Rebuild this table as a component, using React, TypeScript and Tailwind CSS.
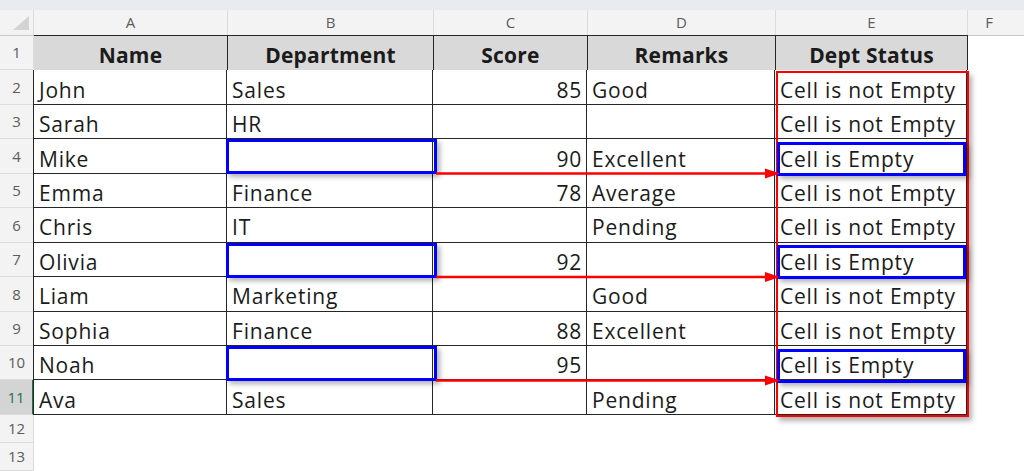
import React from "react";

const cols = [
  { letter: "A", w: "w-[194px]" },
  { letter: "B", w: "w-[206px]" },
  { letter: "C", w: "w-[154px]" },
  { letter: "D", w: "w-[188px]" },
  { letter: "E", w: "w-[192px]" },
];

const header = ["Name", "Department", "Score", "Remarks", "Dept Status"];

const data: [string, string, string, string, string][] = [
  ["John", "Sales", "85", "Good", "Cell is not Empty"],
  ["Sarah", "HR", "", "", "Cell is not Empty"],
  ["Mike", "", "90", "Excellent", "Cell is Empty"],
  ["Emma", "Finance", "78", "Average", "Cell is not Empty"],
  ["Chris", "IT", "", "Pending", "Cell is not Empty"],
  ["Olivia", "", "92", "", "Cell is Empty"],
  ["Liam", "Marketing", "", "Good", "Cell is not Empty"],
  ["Sophia", "Finance", "88", "Excellent", "Cell is not Empty"],
  ["Noah", "", "95", "", "Cell is Empty"],
  ["Ava", "Sales", "", "Pending", "Cell is not Empty"],
];

function RowHead({ n, active }: { n: number; active?: boolean }) {
  return (
    <div
      className={
        "w-[34px] shrink-0 flex items-center justify-center text-[15px] border-b border-r border-[#dcdcdc] " +
        (active ? "bg-[#d4d4d4] text-[#217346] border-r-2 border-r-[#217346]" : "bg-[#f3f3f3] text-[#5c5c5c]")
      }
    >
      {n}
    </div>
  );
}

export default function App() {
  const arrowRows = [173.5, 277, 380.5];
  return (
    <div
      className="relative w-[1024px] h-[471px] overflow-hidden bg-white text-[#1b1b1b]"
      style={{ fontFamily: '"Open Sans", "Noto Sans", sans-serif' }}
    >
      {/* top strip */}
      <div className="h-[10px] bg-[#e8ebef]" />
      {/* column headers */}
      <div className="flex h-[26px] bg-[#f3f3f3] border-b border-[#c9c9c9] text-[15px] text-[#5c5c5c]">
        <div className="w-[34px] shrink-0 relative border-r border-[#dcdcdc]">
          <svg className="absolute right-[4px] bottom-[5px]" width="16" height="14" viewBox="0 0 16 14">
            <polygon points="16,0 16,14 0,14" fill="#d3d3d3" />
          </svg>
        </div>
        {cols.map((c) => (
          <div key={c.letter} className={c.w + " shrink-0 flex items-center justify-center border-r border-[#dcdcdc]"}>
            {c.letter}
          </div>
        ))}
        <div className="flex-1 flex items-center justify-center pr-[14px]">F</div>
      </div>

      {/* header row 1 */}
      <div className="flex h-[34.45px]">
        <RowHead n={1} />
        <div className="flex border-t border-l border-b border-[#262626] -mt-px">
          {header.map((h, i) => (
            <div
              key={h}
              className={
                cols[i].w +
                " shrink-0 bg-[#d9d9d9] border-r border-[#262626] flex items-center justify-center pt-[4px] font-bold text-[21px] tracking-[0.2px] leading-none h-[34.45px]" +
                (i === 0 ? " -ml-px" : "")
              }
            >
              {h}
            </div>
          ))}
        </div>
      </div>

      {data.map((r, ri) => (
        <div key={ri} className="flex h-[34.45px]">
          <RowHead n={ri + 2} active={ri === 9} />
          <div className="flex">
            {r.map((v, ci) => (
              <div
                key={ci}
                className={
                  cols[ci].w +
                  " shrink-0 border-r border-b border-[#262626] flex items-center text-[21px] tracking-[0.8px] leading-none pt-[6px] " +
                  (ci === 2 ? "justify-end pr-[4px]" : "pl-[5px]") +
                  (ci === 0 ? " -ml-px border-l" : "")
                }
              >
                {v}
              </div>
            ))}
          </div>
        </div>
      ))}

      <div className="flex h-[28px]">
        <RowHead n={12} />
      </div>
      <div className="flex h-[28px]">
        <RowHead n={13} />
      </div>

      {/* annotations */}
      <div className="absolute left-[776px] top-[71px] w-[193px] h-[346px] border-2 border-[#ff0000] shadow-[3px_4px_5px_rgba(0,0,0,0.3)]" />
      {[139, 242.5, 346].map((t) => (
        <div
          key={"b" + t}
          className="absolute left-[226px] w-[211px] h-[35px] border-[3px] border-[#0000ff] shadow-[3px_3px_5px_rgba(0,0,0,0.3)]"
          style={{ top: t }}
        />
      ))}
      {[141.5, 245, 348.5].map((t) => (
        <div
          key={"e" + t}
          className="absolute left-[777px] w-[189px] h-[34px] border-[3px] border-[#0000ff] shadow-[3px_3px_5px_rgba(0,0,0,0.3)]"
          style={{ top: t }}
        />
      ))}
      <svg className="absolute left-0 top-0" width="1024" height="471">
        {arrowRows.map((y) => (
          <g key={y}>
            <line x1="436" y1={y} x2="768" y2={y} stroke="#ff0000" strokeWidth="2.5" />
            <polygon points={`765,${y - 5} 780,${y} 765,${y + 5}`} fill="#ff0000" />
          </g>
        ))}
      </svg>
    </div>
  );
}
